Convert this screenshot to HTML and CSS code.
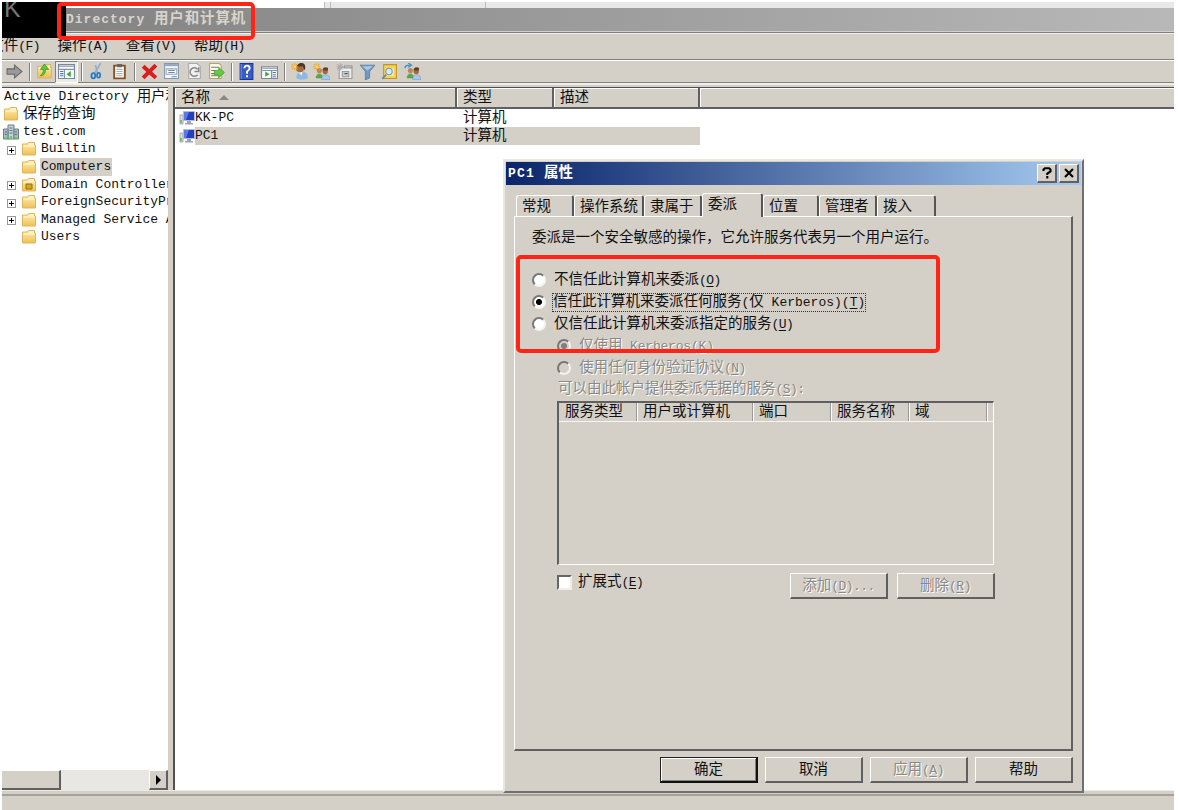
FILE: index.html
```html
<!DOCTYPE html>
<html lang="zh-CN">
  <head>
    <meta charset="UTF-8" />
    <title>Active Directory 用户和计算机</title>
    <link rel="stylesheet" href="styles.css">
  </head>
  <body>
    <svg class="defs" aria-hidden="true">
      <linearGradient id="gold" x2="0" y2="1"><stop stop-color="#fff0ad" /><stop offset="1" stop-color="#eec055" /></linearGradient>
      <symbol id="folder" viewBox="0 0 16 16">
        <path d="M1.500 14V3h5l1-1.500h6V4h1v10z" fill="url(#gold)" stroke="#dfb45c" />
        <path d="M8 3h5M2.500 5h11" stroke="#fffbe0" />
      </symbol>
      <symbol id="pc" viewBox="0 0 16 16">
        <path d="M1 5h3v9H1z" fill="#ddd" stroke="#aaa" /><path d="M2 10v3" stroke="#37c837" stroke-width="1.500" />
        <path d="M4.500 1.500h11v9h-11z" fill="#2440c0" stroke="#b5bdd0" />
        <path d="M5 2h5l-3 8H5z" fill="#5c78e8" /><path d="M8 11h4v2h2v1.500H6V13h2z" fill="#9ba3b8" />
      </symbol>
      <symbol id="domain" viewBox="0 0 16 16">
        <path d="M5 15V1h6v14z" fill="#c5d2d6" stroke="#6b8087" /><path d="M.5 15V5H5v10zM11 15V5h4.500v10z" fill="#a9bac0" stroke="#6b8087" />
        <path d="M6.500 4h3M6.500 6.500h3M6.500 9h3M2 8h2M2 10.500h2M12 8h2M12 10.500h2" stroke="#5f757d" /><path d="M7 12h2v3H7zM2 13h2v2H2zM12 13h2v2h-2z" fill="#55d645" />
      </symbol>
      <symbol id="people" viewBox="0 0 16 16">
        <path d="M3 14c0-5 6-5 6 0z" fill="#5cad44" stroke="#438634" stroke-width=".5" /><circle cx="6" cy="7" r="2.400" fill="#bd8654" />
        <path d="M8 15.500c0-6 8-6 8 0z" fill="#a5c9ef" stroke="#6c96c4" stroke-width=".5" /><circle cx="11.500" cy="8" r="2.500" fill="#a36a42" /><path d="M9 7q0-3 3-3t2 3z" fill="#60402c" />
      </symbol>
      <symbol id="spark" viewBox="0 0 8 8">
        <path d="M4 0v8M0 4h8M1 1l6 6M7 1L1 7" stroke="#f2a52b" stroke-width="1.100" /><circle cx="4" cy="4" r="1.500" fill="#ffd965" />
      </symbol>
    </svg>

    <div class="screen">
      <div class="behind"><i></i><i></i></div>
      <div class="titlebar"><span class="en">Directory </span>用户和计算机</div>
      <div class="menubar">
        <span class="menu-file">文件<b class="en">(F)</b></span>
        <span>操作<b class="en">(A)</b></span>
        <span>查看<b class="en">(V)</b></span>
        <span>帮助<b class="en">(H)</b></span>
      </div>

      <div class="toolbar">
        <span class="tool"><svg viewBox="0 0 16 16"><path d="M1 5.500h7V2l7 6-7 6v-3.500H1z" fill="#999" stroke="#686868" /></svg></span>
        <i class="sep"></i>
        <span class="tool"><svg viewBox="0 0 16 16"><use href="#folder" /><path d="M4 12c4 0 5-3 5-6h3L8 1 4 6h3c0 3-1 4-3 6z" fill="#5bc93b" stroke="#34881f" stroke-width=".6" /></svg></span>
        <span class="tool pressed"><svg viewBox="0 0 16 16"><path d="M.5 1.500h15v13H.5z" fill="#f7f9fc" stroke="#7b8698" /><path d="M1 3h14M1 6h14" stroke="#8494ad" /><path d="M6 6v8" stroke="#7b8698" /><path d="M2 8h3M2 10h3M2 12h3" stroke="#4878c0" /><path d="M12 7.500v6L8 10.500z" fill="#35aa35" /></svg></span>
        <i class="sep"></i>
        <span class="tool"><svg viewBox="0 0 16 16"><path d="M12 0L6 10M7 2l2 8" stroke="#8eaecb" stroke-width="1.500" /><ellipse cx="5" cy="12" rx="1.800" ry="2.500" fill="none" stroke="#247ccd" stroke-width="1.700" /><ellipse cx="10" cy="11.500" rx="1.500" ry="2.300" fill="none" stroke="#247ccd" stroke-width="1.600" /></svg></span>
        <span class="tool"><svg viewBox="0 0 16 16"><path d="M3 2.500h10v12H3z" fill="#fff" stroke="#805522" stroke-width="1.800" /><path d="M5.500 1h5v3h-5z" fill="#666" /><path d="M5 6h6M5 8h6M5 10h6M5 12h6" stroke="#aab1bb" /></svg></span>
        <i class="sep"></i>
        <span class="tool"><svg viewBox="0 0 16 16"><path d="M2 3l12 11M14 2L2 14" stroke="#d91e20" stroke-width="3.800" /></svg></span>
        <span class="tool"><svg viewBox="0 0 16 16"><path d="M1.500.5h13v14h-13z" fill="#f7f8fa" stroke="#8696ac" /><path d="M2 2h12" stroke="#90a7c5" stroke-width="2" /><path d="M3 5.500h10v5H3z" fill="none" stroke="#9aa7b6" /><path d="M5 7h6M5 9h6M8 13h5" stroke="#668cb9" /></svg></span>
        <span class="tool"><svg viewBox="0 0 16 16"><path d="M2.500.5h8l3 3v11h-11z" fill="#f1f1f1" stroke="#aaa" /><path d="M11 6a4 4 0 1 0 0 5M12 4v4H8" fill="none" stroke="#888" stroke-width="1.400" /></svg></span>
        <span class="tool"><svg viewBox="0 0 16 16"><path d="M1.500.5h9l2 2v12h-11z" fill="#fffce5" stroke="#b5a276" /><path d="M3 4h7M3 7h4M3 10h4M3 12h7" stroke="#777" /><path d="M6 7h4V4l5.500 5L10 14v-3H6z" fill="#67ca43" stroke="#369426" stroke-width=".6" /></svg></span>
        <i class="sep"></i>
        <span class="tool"><svg viewBox="0 0 16 16"><path d="M2 .5h12v15H2z" fill="#365bc7" stroke="#17369a" /><path d="M3 1v14" stroke="#7190e1" /><path d="M6 5q0-2.500 2.500-2.500T11 5q0 1.500-2.500 3v2M8.500 11.500v2" fill="none" stroke="#fff" stroke-width="1.800" /></svg></span>
        <span class="tool"><svg viewBox="0 0 16 16"><path d="M.5 3.500h15v11H.5z" fill="#f7f9fc" stroke="#7b8698" /><path d="M1 5h14M1 7h14" stroke="#8494ad" /><path d="M10 7v7" stroke="#7b8698" /><path d="M11 9h3M11 11h3M11 13h3" stroke="#4878c0" /><path d="M4 8v5l4-2.500z" fill="#35aa35" /></svg></span>
        <i class="sep"></i>
        <span class="tool"><svg viewBox="0 0 16 16"><path d="M5 14c0-8 11-8 11 0-3 2-8 2-11 0z" fill="#8db9e3" /><path d="M7 9l3 3 1-4z" fill="#e8f1fa" /><circle cx="8.500" cy="5" r="3.800" fill="#a56c43" /><path d="M5.500 3.500q1-4 5-3.500t2.500 7l-2-4z" fill="#4e3528" /><use href="#spark" width="7" height="7" /></svg></span>
        <span class="tool"><svg viewBox="0 0 16 16"><use href="#people" /><use href="#spark" width="7" height="7" /></svg></span>
        <span class="tool"><svg viewBox="0 0 16 16"><path d="M3 4.500h12v10H3z" fill="#eee" stroke="#999" /><path d="M8 2.500h7v2H8zM6 8h6v5H6z" fill="#ccc" stroke="#999" /><path d="M8 10h3" stroke="#444" /><path d="M4 0v7M.5 3.500h7M1 1l5 5M6 1L1 6" stroke="#aaa" /></svg></span>
        <span class="tool"><svg viewBox="0 0 16 16"><path d="M1 2h14l-5 6v6l-4 2V8z" fill="#6f9bc2" stroke="#507ba1" stroke-width=".7" /><path d="M3 3h10L8 7z" fill="#a9cae3" /></svg></span>
        <span class="tool"><svg viewBox="0 0 16 16"><path d="M2.500 1.500h12v13h-12z" fill="#f4d355" stroke="#bd962b" /><path d="M4 5h8v7H4z" fill="#f8edb0" /><path d="M5 11l-4 4" stroke="#6e85a2" stroke-width="1.500" /><circle cx="7.500" cy="8" r="3" fill="#d5edfa" stroke="#7598b4" /></svg></span>
        <span class="tool"><svg viewBox="0 0 16 16"><use href="#people" /><path d="M1 5q0-3 4-3M4 0l3 2-3 2" fill="none" stroke="#398fd0" stroke-width="1.300" /></svg></span>
      </div>

      <div class="panes">
        <div class="tree">
          <div class="node root"><span class="en">Active Directory </span>用户和计算机</div>
          <div class="node top"><svg><use href="#folder" /></svg><span>保存的查询</span></div>
          <div class="node top"><svg><use href="#domain" /></svg><span class="en">test.com</span></div>
          <div class="node"><i class="plus"></i><svg><use href="#folder" /></svg><span class="en">Builtin</span></div>
          <div class="node"><i></i><svg><use href="#folder" /></svg><span class="en selected">Computers</span></div>
          <div class="node"><i class="plus"></i><svg viewBox="0 0 16 16"><use href="#folder" /><path d="M5 7h6v5H5z" fill="#d9a520" stroke="#946c13" /></svg><span class="en">Domain Controllers</span></div>
          <div class="node"><i class="plus"></i><svg><use href="#folder" /></svg><span class="en">ForeignSecurityPrincipals</span></div>
          <div class="node"><i class="plus"></i><svg><use href="#folder" /></svg><span class="en">Managed Service Accounts</span></div>
          <div class="node"><i></i><svg><use href="#folder" /></svg><span class="en">Users</span></div>
          <div class="hscroll"><span class="thumb"></span><span class="scroll-btn"></span></div>
        </div>

        <div class="list">
          <div class="list-head">
            <span>名称<i class="sort"></i></span><span>类型</span><span>描述</span><span></span>
          </div>
          <div class="list-row"><svg><use href="#pc" /></svg><span class="en name">KK-PC</span><span>计算机</span></div>
          <div class="list-row current"><svg><use href="#pc" /></svg><span class="en name">PC1</span><span>计算机</span></div>
        </div>
      </div>
      <div class="statusbar"></div>
    </div>

    <div class="logo">K</div>
    <div class="mark mark-title"></div>

    <div class="dialog">
      <div class="dialog-title">
        <span><b class="en">PC1 </b>属性</span>
        <span class="caption-btn"><svg viewBox="0 0 12 12"><path d="M2.500 4V2.500L4 1.200h4l1.500 1.300v2L6.300 6.500V8M6.300 9v2.400" fill="none" stroke="#000" stroke-width="2.100" /></svg></span>
        <span class="caption-btn"><svg viewBox="0 0 12 12"><path d="M2 2l8 8M10 2l-8 8" stroke="#000" stroke-width="2.100" /></svg></span>
      </div>
      <div class="tabs">
        <span class="w58">常规</span><span class="w70">操作系统</span><span class="w58">隶属于</span><span class="w60 active">委派</span><span class="w57">位置</span><span class="w58">管理者</span><span class="w59">拨入</span>
      </div>
      <div class="page">
        <p class="intro">委派是一个安全敏感的操作，它允许服务代表另一个用户运行。</p>
        <div class="options">
          <div class="option"><i class="radio"></i><span>不信任此计算机来委派<b class="en">(<u>O</u>)</b></span></div>
          <div class="option"><i class="radio on"></i><span class="focus">信任此计算机来委派任何服务<b class="en">(</b>仅<b class="en"> Kerberos)(<u>T</u>)</b></span></div>
          <div class="option"><i class="radio"></i><span>仅信任此计算机来委派指定的服务<b class="en">(<u>U</u>)</b></span></div>
          <div class="option sub"><i class="radio on"></i><span>仅使用<b class="en wider"> Kerberos(<u>K</u>)</b></span></div>
          <div class="option sub"><i class="radio"></i><span>使用任何身份验证协议<b class="en">(<u>N</u>)</b></span></div>
        </div>
        <div class="list-label">可以由此帐户提供委派凭据的服务<b class="en">(<u>S</u>):</b></div>
        <div class="services">
          <div class="services-head">
            <span>服务类型</span><span class="wide">用户或计算机</span><span>端口</span><span>服务名称</span><span>域</span><span></span>
          </div>
        </div>
        <div class="service-actions">
          <i class="check"></i><span class="check-label">扩展式<b class="en">(<u>E</u>)</b></span>
          <span class="btn disabled">添加<b class="en">(<u>D</u>)...</b></span>
          <span class="btn disabled">删除<b class="en">(<u>R</u>)</b></span>
        </div>
      </div>
      <div class="actions">
        <span class="btn default">确定</span>
        <span class="btn">取消</span>
        <span class="btn disabled">应用<b class="en">(<u>A</u>)</b></span>
        <span class="btn">帮助</span>
      </div>
    </div>
    <div class="mark mark-options"></div>
  </body>
</html>
```
FILE: styles.css
```css
* {
  box-sizing: border-box;
}
body {
  margin: 0;
  height: 810px;
  position: relative;
  overflow: hidden;
  background: #fff;
  color: #111;
  font: 14.5px/18px "Liberation Mono", "Noto Sans CJK SC", sans-serif;
  white-space: nowrap;
}
i, b {
  font-style: normal;
  font-weight: inherit;
}
svg {
  display: block;
  flex: none;
}
.defs {
  position: absolute;
  width: 0;
  height: 0;
}
/* half-width latin, two letters to one CJK cell */
.en {
  font-family: "Liberation Mono", monospace;
  font-size: 13px;
  letter-spacing: -0.55px;
  white-space: pre;
}
.tree .en, .name, .focus .en {
  letter-spacing: 0;
}
.wider {
  letter-spacing: -0.2px;
}
u {
  text-underline-offset: 2px;
}

.screen {
  display: flex;
  flex-direction: column;
  width: 1172px;
  height: 810px;
  margin-left: 2px;
  border-top: 2px solid #fff;
  background: #d4d0c8;
}
.behind {
  display: flex;
  height: 6px;
  padding-left: 322px;
  background: linear-gradient(90deg, #fff 322px, #e8e8e8 0);
}
.behind i {
  width: 7px;
  border: solid #bbb;
  border-width: 0 1px;
}
.behind i + i {
  width: 155px;
  border-left: 0;
}
.titlebar {
  height: 23px;
  padding-left: 64px;
  background: linear-gradient(90deg, #808080, #b8b8b8);
  color: #d8d4cc;
  font-weight: bold;
  letter-spacing: 0.85px;
  line-height: 22px;
}
.titlebar .en {
  letter-spacing: 1px;
}
.menubar {
  display: flex;
  gap: 17.5px;
  height: 28px;
  margin-top: 1px;
  border-top: 1px solid #808080;
  border-bottom: 1px solid #808080;
  box-shadow: inset 0 1px #f0eee9;
  line-height: 27px;
}
.menu-file {
  width: 38px;
  display: flex;
  justify-content: flex-end;
  overflow: hidden;
}
.toolbar {
  display: flex;
  align-items: center;
  height: 23px;
  padding-left: 1px;
  border-top: 1px solid #fff;
  border-bottom: 1px solid #808080;
}
.tool {
  display: grid;
  place-items: center;
  width: 22.6px;
  height: 22px;
}
.tool svg {
  width: 17px;
  height: 17px;
}
.pressed {
  border: 1px solid;
  border-color: #808080 #fff #fff #808080;
  background: #ebe9e4;
}
.sep {
  width: 2px;
  height: 18px;
  margin: 0 2.3px 0 3px;
  border-left: 1px solid #808080;
  border-right: 1px solid #fff;
}

.panes {
  display: flex;
  height: 707px;
  padding-top: 2px;
  border-top: 2px solid #f0eee9;
}
.tree {
  display: flex;
  flex-direction: column;
  width: 166px;
  overflow: hidden;
  border-top: 1px solid #505050;
  background: #fff;
}
.node {
  display: flex;
  flex: none;
  align-items: center;
  height: 17.55px;
  padding-left: 3px;
}
.node svg {
  width: 16px;
  height: 16px;
  margin-right: 4px;
}
.node i {
  flex: none;
  width: 9px;
  height: 9px;
  margin: 2px 5px 0 2px;
}
.node.top {
  padding-left: 1px;
}
.node.root {
  padding-left: 2px;
}
.plus {
  border: 1px solid #999;
  background:
    linear-gradient(#000, #000) center / 5px 1px no-repeat,
    linear-gradient(#000, #000) center / 1px 5px no-repeat;
}
.selected {
  margin-left: -1px;
  padding: 0 1px;
  background: #d4d0c8;
}
.hscroll {
  display: flex;
  justify-content: space-between;
  height: 20px;
  margin-top: auto;
  background: #e9e7e3;
}
.thumb, .scroll-btn {
  width: 59px;
  border: solid;
  border-width: 1px 2px 2px 0;
  border-color: #fff #606060 #606060 #fff;
  background: #d4d0c8;
}
.scroll-btn {
  display: grid;
  place-items: center;
  width: 19px;
  border-left-width: 1px;
}
.scroll-btn::before {
  content: "";
  border: solid transparent;
  border-width: 5px 0 5px 5px;
  border-left-color: #000;
}
.list {
  flex: 1;
  margin-left: 5px;
  border-top: 1px solid #505050;
  border-left: 2px solid #505050;
  background: #fff;
}
.list-head {
  display: flex;
  height: 21px;
  border-bottom: 2px solid #606060;
  background: #d4d0c8;
  line-height: 20px;
}
.list-head span {
  display: flex;
  align-items: center;
  width: 97px;
  padding-left: 6px;
  border-right: 2px solid #606060;
  box-shadow: inset 1px 1px #fff;
}
.list-head span:first-child {
  width: 282px;
}
.list-head span:nth-child(3) {
  width: 146px;
}
.list-head span:last-child {
  flex: 1;
  border: 0;
}
.sort {
  margin-left: 9px;
  border: solid transparent;
  border-width: 0 5px 5px;
  border-bottom-color: #888;
}
.list-row {
  display: flex;
  align-items: center;
  width: 525px;
  height: 18px;
  padding-left: 4px;
}
.list-row svg {
  width: 16px;
  height: 16px;
}
.name {
  width: 268px;
}
.current {
  background: linear-gradient(90deg, #fff 20px, #d4d0c8 0);
}
.statusbar {
  flex: 1;
  border-top: 1px solid #eceae5;
  box-shadow: inset 0 3px #d4d0c8, inset 0 5px #a5a29c;
}

.logo {
  position: absolute;
  left: 2px;
  top: 2px;
  width: 64px;
  height: 36px;
  padding-left: 2px;
  overflow: hidden;
  background: #000;
  color: #777;
  font: 25px/12px "Liberation Sans", sans-serif;
}
.mark {
  position: absolute;
  border: 4px solid #ff2415;
  border-radius: 5px;
}
.mark-title {
  left: 57px;
  top: 2px;
  width: 198px;
  height: 38px;
}
.mark-options {
  left: 516px;
  top: 255px;
  width: 424px;
  height: 98px;
}

.dialog {
  position: absolute;
  left: 503px;
  top: 159px;
  width: 581px;
  height: 634px;
  padding: 1px;
  border: 2px solid;
  border-color: #e9e7e1 #707070 #707070 #e9e7e1;
  background: #d4d0c8;
}
.dialog-title {
  display: flex;
  align-items: center;
  gap: 2px;
  height: 23px;
  padding: 0 2px;
  background: linear-gradient(90deg, #0a246a, #a6caf0);
  color: #fff;
  font-weight: bold;
}
.dialog-title .en {
  letter-spacing: 1.2px;
}
.dialog-title span:first-child {
  flex: 1;
}
.caption-btn {
  display: grid;
  place-items: center;
  width: 20px;
  height: 19px;
  border: solid;
  border-width: 1px 2px 2px 1px;
  border-color: #fff #606060 #606060 #fff;
  background: #d4d0c8;
}
.caption-btn svg {
  width: 12px;
  height: 12px;
}
.tabs {
  display: flex;
  align-items: flex-end;
  height: 31px;
  padding-left: 10px;
}
.tabs span {
  height: 21px;
  padding: 2px 0 0 5px;
  border: solid;
  border-width: 1px 2px 0 1px;
  border-color: #fff #555 #fff #fff;
  border-radius: 3px 3px 0 0;
}
.tabs .active {
  z-index: 1;
  height: 24px;
  margin-bottom: -1px;
  background: #d4d0c8;
}
.w57 { width: 56px; }
.w58 { width: 58px; }
.w59 { width: 59px; }
.w60 { width: 61px; }
.w70 { width: 70px; }
.page {
  height: 535px;
  margin: 0 8px;
  padding: 12px 0 0 17px;
  border: solid;
  border-width: 1px 2px 2px 1px;
  border-color: #fff #606060 #606060 #fff;
}
.intro {
  margin: 0;
}
.options {
  margin-top: 22px;
}
.option {
  display: flex;
  align-items: center;
  height: 22px;
}
.option.sub {
  padding-left: 25px;
}
.sub, .list-label, .disabled {
  color: #8b8984;
  text-shadow: 1px 1px #fff;
}
.radio {
  width: 14px;
  height: 14px;
  margin-right: 8px;
  border: 2px solid;
  border-color: #777 #f5f4f1 #f5f4f1 #777;
  border-radius: 50%;
  background: #fff;
}
.radio.on {
  background: radial-gradient(#000 2.700px, #fff 3.300px);
}
.sub .radio {
  background: #d4d0c8;
}
.sub .radio.on {
  background: radial-gradient(#808080 2.700px, #d4d0c8 3.300px);
}
.focus {
  margin-left: -2px;
  padding: 0 1px;
  outline: 1px dotted #333;
  outline-offset: -1px;
}
.list-label {
  margin: 1px 0 0 26px;
}
.services {
  width: 437px;
  height: 164px;
  margin: 2px 0 0 25px;
  border: solid;
  border-width: 2px 1px 1px 2px;
  border-color: #606060 #fff #fff #606060;
}
.services-head {
  display: flex;
  height: 19px;
  border-bottom: 1px solid #f7f6f2;
  line-height: 19px;
}
.services-head span {
  width: 78px;
  padding-left: 6px;
  border-right: 1px solid #999;
  box-shadow: 1px 0 #fff;
}
.services-head .wide {
  width: 116px;
}
.services-head span:last-child {
  flex: 1;
  border: 0;
  box-shadow: none;
}
.service-actions {
  display: flex;
  gap: 9px;
  margin: 8px 0 0 25px;
}
.check {
  width: 15px;
  height: 15px;
  margin: 2px -3px 0 0;
  border: 2px solid;
  border-color: #666 #f0eee9 #f0eee9 #666;
  background: #fff;
}
.check-label {
  width: 203px;
}
.btn {
  width: 98px;
  height: 26px;
  border: solid;
  border-width: 1px 2px 2px 1px;
  border-color: #fff #606060 #606060 #fff;
  line-height: 24px;
  text-align: center;
}
.btn.default {
  border-color: #222 #111 #111 #222;
  box-shadow: inset 1px 1px #fff, inset -1px -1px #808080;
}
.actions {
  display: flex;
  justify-content: flex-end;
  gap: 7px;
  padding: 6px 8px 0 0;
}
```
